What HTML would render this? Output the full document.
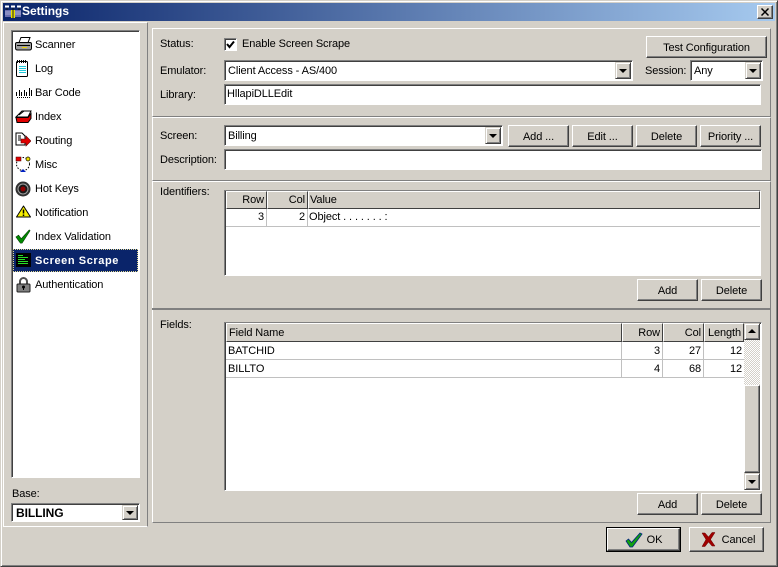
<!DOCTYPE html>
<html><head><meta charset="utf-8">
<style>
html,body{margin:0;padding:0;width:778px;height:567px;overflow:hidden;background:#d4d0c8}
body{font-family:"Liberation Sans",sans-serif;font-size:11px;color:#000;position:relative}
div,span,svg{position:absolute;box-sizing:border-box}
.t{white-space:nowrap;line-height:13px;letter-spacing:-.1px;margin-top:1px}
.sunken{background:#fff;border:1px solid;border-color:#808080 #fff #fff #808080;box-shadow:inset 1px 1px 0 #404040}
.btn{background:#d4d0c8;border:1px solid;border-color:#fff #404040 #404040 #fff;box-shadow:inset -1px -1px 0 #808080;text-align:center;white-space:nowrap;letter-spacing:-.1px}
.arrow{background:#d4d0c8;border:1px solid;border-color:#d4d0c8 #404040 #404040 #d4d0c8;box-shadow:inset 1px 1px 0 #fff,inset -1px -1px 0 #808080}
.arrow.dn:after{content:"";position:absolute;left:50%;top:50%;margin:-2px 0 0 -4px;border:4px solid transparent;border-top:4px solid #000;border-bottom:0}
.panel{border-top:1px solid #fff;border-left:1px solid #fff;border-right:1px solid #808080;border-bottom:1px solid #808080}
.hd{background:#d4d0c8;border:1px solid;border-color:#fff #404040 #404040 #fff;white-space:nowrap;letter-spacing:-.1px;padding:0 2px}
.cell{border-right:1px solid #c0c0c0;border-bottom:1px solid #c0c0c0;background:#fff;line-height:17px;white-space:nowrap;letter-spacing:-.1px;padding:0 2px}
.r{text-align:right}
</style></head><body>

<!-- window frame -->
<div style="left:0;top:0;width:778px;height:567px;border:1px solid;border-color:#d4d0c8 #404040 #404040 #d4d0c8;box-shadow:inset 1px 1px 0 #fff,inset -1px -1px 0 #808080"></div>

<!-- title bar -->
<div style="left:3px;top:3px;width:772px;height:18px;background:linear-gradient(90deg,#0a246a,#a6caef)"></div>
<svg style="left:4px;top:4px" width="18" height="16" viewBox="0 0 18 16">
<rect x="1" y="6" width="16" height="7" fill="#6a6fb0"/>
<path d="M1 8h16M1 10h16" stroke="#a9add6"/>
<rect x="7" y="6" width="4" height="8" fill="#e8e000"/><path d="M9 6v8" stroke="#222"/>
<path d="M1 2.500h4M7 2.500h4M13 2.500h4" stroke="#fff" stroke-width="2"/>
<path d="M3 4v2M9 4v2M15 4v2" stroke="#111"/>
</svg>
<div class="t" style="left:22px;top:5px;margin-top:0;color:#fff;font-weight:bold;font-size:12px;letter-spacing:-.05px">Settings</div>
<div class="btn" style="left:757px;top:5px;width:16px;height:14px"></div>
<svg style="left:757px;top:5px" width="16" height="14"><path d="M4.500 3.500l7 7M11.500 3.500l-7 7" stroke="#000" stroke-width="1.500"/></svg>

<!-- left panel -->
<div class="panel" style="left:3px;top:22px;width:145px;height:505px;border-color:#fff #808080 #fff #fff"></div>
<div class="sunken" style="left:11px;top:30px;width:129px;height:448px"></div>

<!-- list icons -->
<svg style="left:15px;top:37px" width="17" height="15" viewBox="0 0 17 15"><path d="M6 .5h9l-2 5H4z" fill="#fff" stroke="#000"/><path d="M2 5.500h13q1.500 0 1.500 1.500v4q0 2-2 2h-12q-2 0-2-2V7q0-1.500 1.500-1.500z" fill="#a0a0a0" stroke="#000"/><path d="M2 8.500h13" stroke="#000"/><rect x="7" y="10" width="5" height="1" fill="#e8d000"/></svg>
<svg style="left:15px;top:60px" width="14" height="17" viewBox="0 0 14 17"><rect x="1.500" y="1.500" width="11" height="15" rx="1" fill="#fff" stroke="#000"/><path d="M2.500 0v3M4.500 0v3M6.500 0v3M8.500 0v3M10.500 0v3" stroke="#000"/><path d="M4 6.500h7M4 8.500h7M4 10.500h7M4 12.500h7" stroke="#20c8d8"/></svg>
<svg style="left:16px;top:87px" width="16" height="12" viewBox="0 0 16 12"><path d="M.5 5v4M3.500 3v6M5.500 5v4M8.500 3v6M10.500 5v4M13.500 1v8M15.500 3v6" stroke="#000"/><path d="M1 10.500h1M3 10.500h1M5 10.500h1M7 10.500h1M9 10.500h1M11 10.500h1M13 10.500h1" stroke="#000"/></svg>
<svg style="left:15px;top:110px" width="17" height="14" viewBox="0 0 17 14"><path d="M1 7l6-6h9l-3 6z" fill="#fff" stroke="#000"/><path d="M4 5l5-4h6" fill="none" stroke="#000"/><path d="M1 7.500h12l3-4v5l-3 4H2z" fill="#e00000" stroke="#000"/></svg>
<svg style="left:15px;top:132px" width="16" height="16" viewBox="0 0 16 16"><path d="M1 1h6l3 3v9H1z" fill="#fff" stroke="#000"/><path d="M3 4h3M3 6h3M3 8h3" stroke="#000"/><path d="M6 7h5V4l5 5-5 5v-3H6z" fill="#e00000" stroke="#600" stroke-width=".6"/></svg>
<svg style="left:15px;top:155px" width="16" height="18" viewBox="0 0 16 18"><circle cx="8" cy="9" r="6.500" fill="none" stroke="#000" stroke-dasharray="1.500 1.500"/><rect x="1" y="2" width="5" height="4" fill="#e00000" stroke="#400" stroke-width=".5"/><circle cx="13" cy="4" r="2" fill="#f0e000" stroke="#000" stroke-width=".7"/><path d="M5 17l3-3 3 3z" fill="#0020c0"/></svg>
<svg style="left:15px;top:181px" width="16" height="16" viewBox="0 0 16 16"><circle cx="8" cy="8" r="7.500" fill="#303030"/><circle cx="8" cy="8" r="5.500" fill="#a0a0a0"/><circle cx="8" cy="8" r="4.500" fill="#181818"/><circle cx="8" cy="8" r="2.500" fill="#900000"/></svg>
<svg style="left:16px;top:205px" width="15" height="13" viewBox="0 0 15 13"><path d="M7.500 1L14.500 12H.5z" fill="#f8f000" stroke="#000" stroke-linejoin="round"/><path d="M7.500 4.500v4M7.500 9.500v1.500" stroke="#000" stroke-width="1.500"/></svg>
<svg style="left:15px;top:228px" width="16" height="17" viewBox="0 0 18 17"><path d="M1 9l3-2 3 4 9-10 1 1-9 14H6z" fill="#008a00" stroke="#003000" stroke-width=".6"/></svg>

<!-- list items -->
<div class="t" style="left:35px;top:38px">Scanner</div>
<div class="t" style="left:35px;top:62px">Log</div>
<div class="t" style="left:35px;top:86px">Bar Code</div>
<div class="t" style="left:35px;top:110px">Index</div>
<div class="t" style="left:35px;top:134px">Routing</div>
<div class="t" style="left:35px;top:158px">Misc</div>
<div class="t" style="left:35px;top:182px">Hot Keys</div>
<div class="t" style="left:35px;top:206px">Notification</div>
<div class="t" style="left:35px;top:230px">Index Validation</div>
<div style="left:13px;top:249px;width:125px;height:23px;background:#0a246a;border:1px dotted #e0d890"></div>
<svg style="left:16px;top:253px" width="15" height="14" viewBox="0 0 15 14"><rect width="15" height="14" fill="#000"/><path d="M2 2.500h5M2 4.500h10M2 6.500h7M2 8.500h10M2 10.500h10" stroke="#28e028"/></svg>
<div class="t" style="left:35px;top:254px;color:#fff;font-weight:bold;letter-spacing:.58px">Screen Scrape</div>
<svg style="left:16px;top:277px" width="15" height="16" viewBox="0 0 15 16"><path d="M4 7V4.500a3.500 3.500 0 0 1 7 0V7" fill="none" stroke="#505050" stroke-width="2"/><rect x="1" y="7" width="13" height="8" rx="1" fill="#808080" stroke="#202020"/><circle cx="7.500" cy="10" r="1.500" fill="#000"/><path d="M7.500 10v3" stroke="#000"/></svg>
<div class="t" style="left:35px;top:278px">Authentication</div>

<!-- base -->
<div class="t" style="left:12px;top:487px">Base:</div>
<div class="sunken" style="left:11px;top:503px;width:129px;height:19px"></div>
<div class="t" style="left:16px;top:506px;font-weight:bold;font-size:12px;letter-spacing:-.07px">BILLING</div>
<div class="arrow dn" style="left:122px;top:505px;width:16px;height:15px"></div>

<!-- panels -->
<div class="panel" style="left:152px;top:28px;width:619px;height:89px"></div>
<div class="panel" style="left:152px;top:117px;width:619px;height:64px"></div>
<div class="panel" style="left:152px;top:181px;width:619px;height:129px"></div>
<div class="panel" style="left:152px;top:309px;width:619px;height:214px"></div>
<div style="left:152px;top:308px;width:619px;height:2px;background:#808080"></div>

<!-- panel 1 -->
<div class="t" style="left:160px;top:37px">Status:</div>
<div class="sunken" style="left:224px;top:38px;width:13px;height:13px"></div>
<svg style="left:224px;top:38px" width="13" height="13"><path d="M3 6l2.500 3L10 3.500" fill="none" stroke="#000" stroke-width="2"/></svg>
<div class="t" style="left:242px;top:37px">Enable Screen Scrape</div>
<div class="btn" style="left:646px;top:36px;width:121px;height:22px;line-height:22px">Test Configuration</div>

<div class="t" style="left:160px;top:64px">Emulator:</div>
<div class="sunken" style="left:224px;top:60px;width:409px;height:21px"></div>
<div class="t" style="left:228px;top:64px">Client Access - AS/400</div>
<div class="arrow dn" style="left:615px;top:62px;width:16px;height:17px"></div>
<div class="t" style="left:645px;top:64px">Session:</div>
<div class="sunken" style="left:690px;top:60px;width:73px;height:21px"></div>
<div class="t" style="left:694px;top:64px">Any</div>
<div class="arrow dn" style="left:745px;top:62px;width:16px;height:17px"></div>

<div class="t" style="left:160px;top:88px">Library:</div>
<div class="sunken" style="left:224px;top:84px;width:537px;height:21px"></div>
<div class="t" style="left:227px;top:87px">HllapiDLLEdit</div>

<!-- panel 2 -->
<div class="t" style="left:160px;top:129px">Screen:</div>
<div class="sunken" style="left:224px;top:125px;width:279px;height:21px"></div>
<div class="t" style="left:228px;top:129px">Billing</div>
<div class="arrow dn" style="left:485px;top:127px;width:16px;height:17px"></div>
<div class="btn" style="left:508px;top:125px;width:61px;height:22px;line-height:23px">Add ...</div>
<div class="btn" style="left:572px;top:125px;width:61px;height:22px;line-height:23px">Edit ...</div>
<div class="btn" style="left:636px;top:125px;width:61px;height:22px;line-height:23px">Delete</div>
<div class="btn" style="left:700px;top:125px;width:61px;height:22px;line-height:23px">Priority ...</div>
<div class="t" style="left:160px;top:153px">Description:</div>
<div class="sunken" style="left:224px;top:149px;width:538px;height:21px"></div>

<!-- identifiers -->
<div class="t" style="left:160px;top:185px">Identifiers:</div>
<div class="sunken" style="left:224px;top:190px;width:537px;height:86px"></div>
<div class="hd r" style="left:226px;top:191px;width:41px;height:18px;line-height:16px">Row</div>
<div class="hd r" style="left:267px;top:191px;width:41px;height:18px;line-height:16px">Col</div>
<div class="hd" style="left:308px;top:191px;width:452px;height:18px;line-height:16px;padding-left:1px">Value</div>
<div class="cell r" style="left:226px;top:209px;width:41px;height:18px">3</div>
<div class="cell r" style="left:267px;top:209px;width:41px;height:18px">2</div>
<div class="cell" style="left:308px;top:209px;width:452px;height:18px;padding-left:1px;border-right:0">Object . . . . . . . :</div>
<div class="btn" style="left:637px;top:279px;width:61px;height:22px;line-height:23px">Add</div>
<div class="btn" style="left:701px;top:279px;width:61px;height:22px;line-height:23px">Delete</div>

<!-- fields -->
<div class="t" style="left:160px;top:318px">Fields:</div>
<div class="sunken" style="left:224px;top:322px;width:538px;height:169px"></div>
<div class="hd" style="left:226px;top:323px;width:396px;height:19px;line-height:18px">Field Name</div>
<div class="hd r" style="left:622px;top:323px;width:41px;height:19px;line-height:18px">Row</div>
<div class="hd r" style="left:663px;top:323px;width:41px;height:19px;line-height:18px">Col</div>
<div class="hd r" style="left:704px;top:323px;width:40px;height:19px;line-height:18px">Length</div>
<div class="cell" style="left:226px;top:342px;width:396px;height:18px;line-height:18px">BATCHID</div>
<div class="cell r" style="left:622px;top:342px;width:41px;height:18px;line-height:18px">3</div>
<div class="cell r" style="left:663px;top:342px;width:41px;height:18px;line-height:18px">27</div>
<div class="cell r" style="left:704px;top:342px;width:40px;height:18px;line-height:18px;border-right:0">12</div>
<div class="cell" style="left:226px;top:360px;width:396px;height:18px;line-height:18px">BILLTO</div>
<div class="cell r" style="left:622px;top:360px;width:41px;height:18px;line-height:18px">4</div>
<div class="cell r" style="left:663px;top:360px;width:41px;height:18px;line-height:18px">68</div>
<div class="cell r" style="left:704px;top:360px;width:40px;height:18px;line-height:18px;border-right:0">12</div>
<!-- scrollbar -->
<div style="left:744px;top:340px;width:16px;height:150px;background:repeating-conic-gradient(#d4d0c8 0 25%,#fff 0 50%) 0 0/2px 2px"></div>
<div class="arrow" style="left:744px;top:323px;width:16px;height:17px"></div>
<div style="left:748px;top:329px;border:4px solid transparent;border-bottom:4px solid #000;border-top:0;z-index:2"></div>
<div style="left:744px;top:385px;width:16px;height:88px;background:#d4d0c8;border:1px solid;border-color:#fff #404040 #404040 #fff;box-shadow:inset -1px -1px 0 #808080"></div>
<div class="arrow dn" style="left:744px;top:473px;width:16px;height:17px"></div>
<div class="btn" style="left:637px;top:493px;width:61px;height:22px;line-height:23px">Add</div>
<div class="btn" style="left:701px;top:493px;width:61px;height:22px;line-height:23px">Delete</div>

<!-- footer buttons -->
<div style="left:606px;top:527px;width:75px;height:25px;border:1px solid #000"></div>
<div class="btn" style="left:607px;top:528px;width:73px;height:23px;line-height:23px;padding-left:22px">OK</div>
<svg style="left:625px;top:532px" width="18" height="16" viewBox="0 0 18 16"><path d="M1 9l2.500-2 3 3.500L15 1l2 1-9.500 13H5z" fill="#10a010" stroke="#002080" stroke-width=".8"/></svg>
<div class="btn" style="left:689px;top:527px;width:75px;height:25px;line-height:24px;padding-left:24px">Cancel</div>
<svg style="left:701px;top:532px" width="15" height="15" viewBox="0 0 15 15"><path d="M1 1h3l3.500 4L11 .5h3l-4.500 7L14 14h-3L7.500 10 4 14.500H1l4-7z" fill="#a00000" stroke="#600" stroke-width=".5"/></svg>

</body></html>
